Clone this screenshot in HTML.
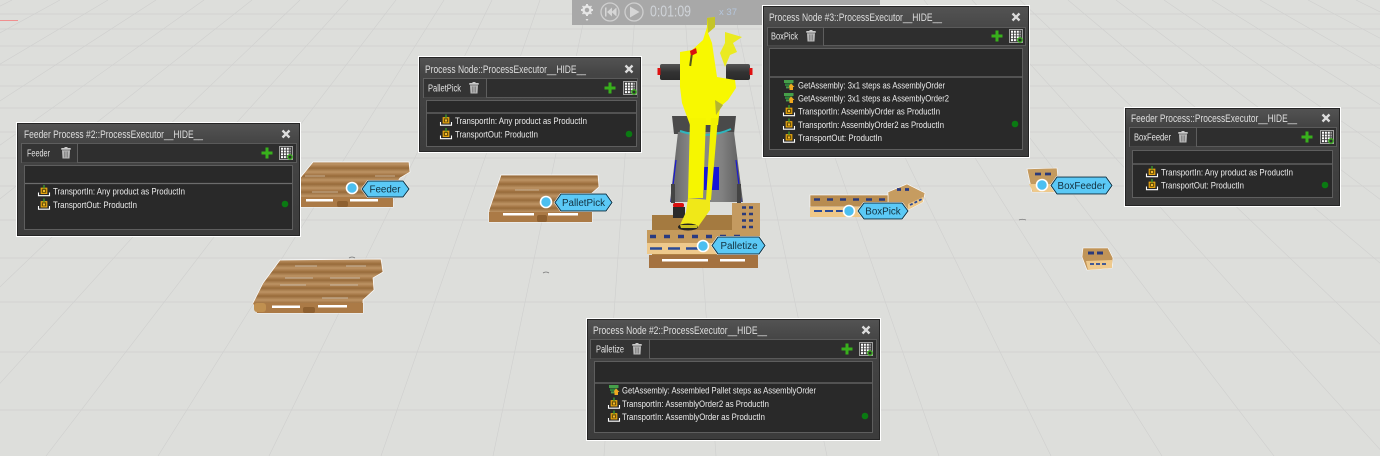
<!DOCTYPE html>
<html>
<head>
<meta charset="utf-8">
<style>
html,body{margin:0;padding:0;width:1380px;height:456px;overflow:hidden;background:#dddedb}
svg{display:block}
text{font-family:"Liberation Sans",sans-serif}
.t{font-size:11px;fill:#dedede}
.r{font-size:9.3px;fill:#ececec}
.l{font-size:9.8px;fill:#e6e6e6}
.h{font-size:9.8px;fill:#12303e;text-anchor:middle}
.o{fill:url(#pg);stroke:#252525;stroke-width:1}
.w{fill:none;stroke:#fff;stroke-width:1}
.s{fill:#2e2e2e;stroke:#5a5a5a;stroke-width:1}
.b{fill:#292929;stroke:#5e5e5e;stroke-width:1}
.e{stroke:#6c6c6c;stroke-width:1.3}
.tb{fill:#343434;stroke:#5e5e5e;stroke-width:1}
.g{stroke:#cfcfce;stroke-width:.6;fill:none}
.hz{stroke:#d3d3d2;stroke-width:1}
.wood{stroke:#fff;stroke-width:.7}
.m{fill:#4cbff0;stroke:#fff;stroke-width:1.6}
.x{fill:#5bc9f6;stroke:#12303e;stroke-width:1}
.xh{fill:none;stroke:#fff;stroke-width:2}
</style>
</head>
<body>
<svg width="1380" height="456" viewBox="0 0 1380 456" xmlns="http://www.w3.org/2000/svg">
<defs>
<linearGradient id="pg" x1="0" y1="0" x2="0" y2="1"><stop offset="0" stop-color="#535353"/><stop offset=".18" stop-color="#444"/><stop offset="1" stop-color="#3c3c3c"/></linearGradient>
<linearGradient id="st1" gradientUnits="userSpaceOnUse" x1="0" y1="0" x2="0" y2="8" spreadMethod="repeat"><stop offset="0" stop-color="#966a3a"/><stop offset=".5" stop-color="#bd9364"/><stop offset="1" stop-color="#9a6c3a"/></linearGradient>
<linearGradient id="gy" x1="0" y1="0" x2="1" y2="0"><stop offset="0" stop-color="#636363"/><stop offset=".3" stop-color="#8a8a8a"/><stop offset=".7" stop-color="#828282"/><stop offset="1" stop-color="#5a5a5a"/></linearGradient>
<linearGradient id="mt" x1="0" y1="0" x2="0" y2="1"><stop offset="0" stop-color="#555"/><stop offset=".5" stop-color="#333"/><stop offset="1" stop-color="#2a2a2a"/></linearGradient>
<g id="tr">
<path d="M-5.500 1.500v3.200h11v-3.200" fill="none" stroke="#fff" stroke-width="1.100"/>
<rect x="-2.800" y="-2.800" width="5.600" height="5.200" fill="#6a5208" stroke="#f0aa10" stroke-width="1.100"/>
<path d="M0 -6v3.500" stroke="#3aa02a" stroke-width="1.300"/>
<rect x="-1" y="-1" width="2" height="2" fill="#f4b830"/>
</g>
<g id="as">
<rect x="-5" y="-5" width="9.500" height="3" fill="#46a04a"/>
<rect x="-4" y="-1.600" width="7.500" height="2.600" fill="#2f7f3a"/>
<rect x="-3" y="1.400" width="4" height="2" fill="#4a9a4a"/>
<path d="M0 1l2-2.500 3.500 3.500h-1.500v3h-3.500v-2.500z" fill="#f0a820"/>
</g>
<g id="tsh">
<path d="M-1.500 -6h3v1h3.200v1.700h-9.400v-1.700h3.200z" fill="#cacaca"/>
<path d="M-4 -2.800h8l-.5 8.300h-7z" fill="#b8b8b8"/>
<path d="M-1.700 -1.500v6M0 -1.500v6M1.700 -1.500v6" stroke="#6a6a6a" stroke-width=".6"/>
</g>
<path id="pl" d="M-5.500 0h11M0 -5.500v11" stroke="#38b01c" stroke-width="3" fill="none"/>
<g id="gd">
<rect x="-6.500" y="-6.500" width="13" height="13" fill="#3a3a3a" stroke="#a0a0a0" stroke-width="1"/>
<path d="M-5 -4.300h9.500M-5 -1.500h9.500M-5 1.300h9.500M-5 4.100h6.500" stroke="#fff" stroke-width="2" stroke-dasharray="2 .9"/>
<circle cx="4" cy="4" r="2.200" fill="#2c2c2c" stroke="#38b01c" stroke-width="1.300"/>
</g>
<path id="cl" d="M-3.500 -3.500l7 7M3.500 -3.500l-7 7" stroke="#dcdcdc" stroke-width="2.300" fill="none"/>
</defs>

<rect width="1380" height="456" fill="#dddedb"/>

<!-- ground grid -->
<g class="hz">
<path d="M0 14H1380M0 29H1380M0 46H1380M0 65H1380M0 86H1380M0 108H1380M0 132H1380M0 158H1380M0 186H1380M0 220H1380M0 258H1380M0 302H1380M0 352H1380M0 410H1380"/>
</g>
<g class="g">
<path d="M12 0L-884 456M60 0L-772 456M108 0L-660 456M156 0L-549 456M204 0L-437 456M252 0L-326 456M300 0L-177 456M348 0L-66 456M396 0L46 456M444 0L158 456M492 0L269 456M540 0L381 456M588 0L493 456M636 0L604 456M684 0L716 456M732 0L827 456M780 0L939 456M828 0L1051 456M876 0L1162 456M924 0L1274 456M972 0L1386 456M1020 0L1497 456M1068 0L1609 456M1116 0L1720 456M1164 0L1832 456M1212 0L1944 456M1260 0L2055 456M1308 0L2167 456M1356 0L2279 456"/>
</g>
<path d="M0 20.500H18" stroke="#f08f8f" stroke-width="1"/>

<!-- tiny ground marks -->
<g fill="none" stroke="#777" stroke-width=".8">
<path d="M349 258q3-2 6 0M543 273q3-2 6 0M1019 220q3-1.500 7 0"/>
</g>

<!-- playback bar -->
<rect x="572" y="0" width="308" height="25" fill="#a8a8a8"/>
<g fill="#e6e6e6">
<circle cx="587" cy="10" r="3.500" fill="none" stroke="#e6e6e6" stroke-width="2.500"/>
<path d="M586 4h2v2h-2zM586 14h2v2h-2zM581 9h2v2h-2zM591 9h2v2h-2zM583 5.500l1.500 1.500-1 1-1.500-1.500zM591 5.500l-1.500 1.500 1 1 1.500-1.500zM583 14.500l1.500-1.500-1-1-1.500 1.500zM591 14.500l-1.500-1.500 1-1 1.500 1.500z"/>
<path d="M585.500 19h3l-1.500 2z"/>
</g>
<g fill="none" stroke="#cfcfcf" stroke-width="1.300">
<circle cx="610" cy="12" r="9"/>
<circle cx="634" cy="12" r="9"/>
</g>
<path d="M605 7.500h1.500v9h-1.500zM612 7.500v9l-5-4.500zM616.500 7.500v9l-5-4.500z" fill="#d6d6d6"/>
<path d="M630 6.500l9.500 5.500-9.500 5.500z" fill="#d6d6d6"/>
<text x="650" y="16.500" font-size="16" fill="#cfd3d8" textLength="41" lengthAdjust="spacingAndGlyphs">0:01:09</text>
<text x="719" y="15" font-size="9.500" fill="#b5c6dc" textLength="18" lengthAdjust="spacing">x 37</text>

<!-- pallet A (Feeder) -->
<g>
<path class="wood" d="M313 162L409 162L410 172L400 178L393 190V207H300V178Z" fill="url(#st1)"/>
<path d="M305 176h20M375 176h20M312 192h26" stroke="#d0c0aa" stroke-width=".8"/>
<rect x="300" y="197" width="93" height="10" fill="#ab7a46"/>
<rect x="337" y="201" width="11" height="6" rx="2" fill="#8e6030"/>
<rect x="306" y="199" width="27" height="2.500" fill="#fff"/>
<rect x="350" y="199" width="28" height="2.500" fill="#fff"/>
</g>
<!-- pallet B -->
<g>
<path class="wood" d="M280 260L381 259L383 272L373 278L374 290L363 300V313H257L253 303L263 283Z" fill="url(#st1)"/>
<path d="M295 266h22M346 266h20M285 278h28M330 278h30M280 285h26M330 285h28M322 298h26" stroke="#d0c8ba" stroke-width=".8"/>
<path d="M253 303H363V313H257Z" fill="#ab7a46"/>
<rect x="254" y="303" width="12" height="9" rx="3" fill="#c09050"/>
<rect x="303" y="307" width="12" height="6" rx="2" fill="#8e6030"/>
<rect x="272" y="305.500" width="28" height="2.500" fill="#fff"/>
<rect x="318" y="305" width="29" height="2.500" fill="#fff"/>
</g>
<!-- pallet C (PalletPick) -->
<g>
<path class="wood" d="M501 175L598 175L599 187L592 193V222H489V210Z" fill="url(#st1)"/>
<path d="M515 190h24M560 196h26" stroke="#d0c0aa" stroke-width=".8"/>
<rect x="489" y="212" width="103" height="10" fill="#ab7a46"/>
<rect x="537" y="215" width="10" height="7" rx="2" fill="#8e6030"/>
<rect x="503" y="213" width="31" height="2.500" fill="#fff"/>
<rect x="548" y="213" width="30" height="2.500" fill="#fff"/>
</g>

<!-- robot -->
<g>
<rect x="660" y="64" width="24" height="16" rx="2" fill="url(#mt)"/>
<rect x="726" y="64" width="24" height="16" rx="2" fill="url(#mt)"/>
<rect x="657.500" y="68" width="3" height="7" fill="#e01010"/>
<rect x="749.500" y="68" width="3" height="7" fill="#e01010"/>
<path d="M672 116H736L734 134H674Z" fill="#4a4a4a"/>
<path d="M678 132H734L743 202H670Z" fill="url(#gy)"/>
<path d="M680 131Q707 140 731 129" stroke="#2fb5bd" stroke-width="2" fill="none"/>
<path d="M676 160L671 202M736 160L741 202" stroke="#1a1ad0" stroke-width="1.200" fill="none"/>
<rect x="671" y="184" width="4" height="19" fill="#444"/>
<rect x="737" y="184" width="4" height="19" fill="#444"/>
<rect x="704" y="167" width="15" height="23" fill="#1616d8"/>
<!-- second upper piece -->
<path d="M725 32L742 37L733 43L737 52L730 55L725 67L720 53L725 43Z" fill="#eaea20"/>
<!-- main upper body -->
<path d="M680 52L692 50L703 40L707 27L707 18L715 17L715 27L708 33L712 43L717 77L735 80L736 88L728 100L720 107L718 125L690 125L682 103L680 87Z" fill="#f8f800"/>
<path d="M707 18L715 17L715 27L708 33Z" fill="#c4c428"/>
<path d="M715 100L723 105L716 115Z" fill="#b5b530"/>
<path d="M690 51L696 48L697 53L691 56Z" fill="#d81010"/>
<rect x="690" y="55" width="2" height="11" fill="#55551a" transform="rotate(8 691 60)"/>
<!-- arm links -->
<path d="M690 118H706L703 198H688Z" fill="#f6f600"/>
<path d="M711 118H718L711 200H706Z" fill="#f2f200"/>
</g>

<!-- palletize stack -->
<g>
<path d="M652 215H758V255H652Z" fill="#b08244"/>
<path d="M652 215H732V230H652Z" fill="#a47a40"/>
<rect x="732" y="203" width="28" height="30" fill="#c49a60"/>
<path d="M742 207.500h11M742 214h11M742 220.500h11M742 227h11" stroke="#2a3a7a" stroke-width="2.500" stroke-dasharray="4 3"/>
<rect x="647" y="230" width="113" height="13" fill="#c59a5c"/>
<path d="M650 236.500H745" stroke="#2a3a80" stroke-width="3.500" stroke-dasharray="6 8"/>
<rect x="647" y="243" width="113" height="11" fill="#eec98c"/>
<path d="M650 248.500H700" stroke="#2a4a96" stroke-width="2.500" stroke-dasharray="12 6"/>
<path d="M649 255H758V268H649Z" fill="#a47240"/>
<rect x="662" y="259" width="46" height="2.500" fill="#fff"/>
<rect x="720" y="259" width="25" height="2.500" fill="#fff"/>
<rect x="673" y="203" width="11" height="4.500" rx="2" fill="#d81010"/>
<rect x="673" y="207" width="12" height="11" fill="#2a2a2a"/>
<path d="M688 198L710 200V210L698 227L680 225L686 212Z" fill="#f0e818"/>
<ellipse cx="688" cy="227" rx="10" ry="3.500" fill="#222"/>
<path d="M680 225H698L697 228H681Z" fill="#c8c020"/>
</g>

<!-- boxes -->
<g>
<path d="M888 192L907 184L925 193L923 202L908 210L888 204Z" fill="#c69c60" stroke="#fff" stroke-width=".6"/>
<path d="M897 189.500h12" stroke="#2a3a80" stroke-width="2.800" stroke-dasharray="4 4"/>
<path d="M908 204L923 197L923 202L908 210Z" fill="#eec98c"/>
<path d="M910 205L922 199" stroke="#2a4a96" stroke-width="1.800" stroke-dasharray="3 2"/>
<rect x="810" y="195" width="78" height="12" fill="#b88c50" stroke="#fff" stroke-width=".6"/>
<path d="M814 199.500H886" stroke="#2a3a7a" stroke-width="2.600" stroke-dasharray="6 7"/>
<rect x="810" y="207" width="78" height="10" fill="#efc888"/>
<path d="M814 211H846" stroke="#2a4a96" stroke-width="2" stroke-dasharray="8 3"/>
<path d="M1027 169L1057 168L1059 192L1032 192Z" fill="#c49a5e" stroke="#fff" stroke-width=".6"/>
<path d="M1035 174h20" stroke="#2a3a7a" stroke-width="2.800" stroke-dasharray="6 4"/>
<path d="M1029 184L1033 192H1058V184Z" fill="#eec98c"/>
<path d="M1083 248L1108 248L1113 258L1112 268L1087 270L1082 257Z" fill="#c09458" stroke="#fff" stroke-width=".6"/>
<path d="M1088 253h18" stroke="#2a3a7a" stroke-width="3" stroke-dasharray="6 3"/>
<path d="M1086 261L1112 260V268L1088 270Z" fill="#eec98c"/>
<path d="M1090 264h18" stroke="#2a4a96" stroke-width="1.800" stroke-dasharray="4 2"/>
</g>

<!-- markers and tags -->
<g>
<path class="xh" d="M362 189L368 181H403L409 189L403 197H368Z"/>
<path class="x" d="M362 189L368 181H403L409 189L403 197H368Z"/>
<text class="h" x="385" y="192.500">Feeder</text>
<circle class="m" cx="352" cy="188" r="5.500"/>

<path class="xh" d="M555 202.500L561 194H606L612 202.500L606 211H561Z"/>
<path class="x" d="M555 202.500L561 194H606L612 202.500L606 211H561Z"/>
<text class="h" x="583.500" y="206">PalletPick</text>
<circle class="m" cx="546" cy="202" r="5.500"/>

<path class="xh" d="M712 245.500L718 237H759L765 245.500L759 254H718Z"/>
<path class="x" d="M712 245.500L718 237H759L765 245.500L759 254H718Z"/>
<text class="h" x="739" y="249">Palletize</text>
<circle class="m" cx="703" cy="246" r="5.500"/>

<path class="xh" d="M858 211L864 203H902L908 211L902 219H864Z"/>
<path class="x" d="M858 211L864 203H902L908 211L902 219H864Z"/>
<text class="h" x="883" y="214.500">BoxPick</text>
<circle class="m" cx="849" cy="211" r="5.500"/>

<path class="xh" d="M1051 185.500L1057 177H1106L1112 185.500L1106 194H1057Z"/>
<path class="x" d="M1051 185.500L1057 177H1106L1112 185.500L1106 194H1057Z"/>
<text class="h" x="1081.500" y="189">BoxFeeder</text>
<circle class="m" cx="1042" cy="185" r="5.500"/>
</g>

<!-- Feeder panel -->
<g>
<rect class="w" x="16.500" y="122.500" width="284" height="114"/>
<rect class="o" x="17.500" y="123.500" width="282" height="112"/>
<text class="t" x="24" y="138" textLength="179" lengthAdjust="spacingAndGlyphs">Feeder Process #2::ProcessExecutor__HIDE__</text>
<use href="#cl" x="286" y="134"/>
<rect class="s" x="21.500" y="143.500" width="275" height="19"/>
<path class="tb" d="M21.500 162.500V143.500H77.500V162.500"/>
<text class="l" x="27" y="156.500" textLength="23" lengthAdjust="spacingAndGlyphs">Feeder</text>
<use href="#tsh" x="66" y="153"/>
<use href="#pl" x="267" y="153"/>
<use href="#gd" x="286" y="153"/>
<rect class="b" x="24.500" y="165.500" width="268" height="64"/>
<path class="e" d="M25 183.500H292"/>
<use href="#tr" x="44" y="191"/>
<text class="r" x="53" y="194.500" textLength="132" lengthAdjust="spacingAndGlyphs">TransportIn: Any product as ProductIn</text>
<use href="#tr" x="44" y="204.500"/>
<text class="r" x="53" y="208" textLength="84" lengthAdjust="spacingAndGlyphs">TransportOut: ProductIn</text>
<circle cx="285" cy="204" r="3.300" fill="#0a7a12"/>
</g>

<!-- PalletPick panel -->
<g>
<rect class="w" x="418.500" y="56.500" width="223" height="96"/>
<rect class="o" x="419.500" y="57.500" width="221" height="94"/>
<text class="t" x="425" y="73" textLength="161" lengthAdjust="spacingAndGlyphs">Process Node::ProcessExecutor__HIDE__</text>
<use href="#cl" x="629" y="69"/>
<rect class="s" x="423.500" y="78.500" width="214" height="19"/>
<path class="tb" d="M423.500 97.500V78.500H486.500V97.500"/>
<text class="l" x="428" y="91.500" textLength="33" lengthAdjust="spacingAndGlyphs">PalletPick</text>
<use href="#tsh" x="474" y="88"/>
<use href="#pl" x="610" y="88"/>
<use href="#gd" x="630" y="88"/>
<rect class="b" x="426.500" y="100.500" width="210" height="46"/>
<path class="e" d="M427 113H636"/>
<use href="#tr" x="446" y="120.500"/>
<text class="r" x="455" y="124" textLength="132" lengthAdjust="spacingAndGlyphs">TransportIn: Any product as ProductIn</text>
<use href="#tr" x="446" y="134"/>
<text class="r" x="455" y="137.500" textLength="83" lengthAdjust="spacingAndGlyphs">TransportOut: ProductIn</text>
<circle cx="629" cy="134" r="3.300" fill="#0a7a12"/>
</g>

<!-- BoxPick panel -->
<g>
<rect class="w" x="762.500" y="5.500" width="267" height="152"/>
<rect class="o" x="763.500" y="6.500" width="265" height="150"/>
<text class="t" x="769" y="21" textLength="173" lengthAdjust="spacingAndGlyphs">Process Node #3::ProcessExecutor__HIDE__</text>
<use href="#cl" x="1016" y="17"/>
<rect class="s" x="767.500" y="27.500" width="258" height="18"/>
<path class="tb" d="M767.500 45.500V27.500H823.500V45.500"/>
<text class="l" x="771" y="39.500" textLength="27" lengthAdjust="spacingAndGlyphs">BoxPick</text>
<use href="#tsh" x="811" y="36"/>
<use href="#pl" x="997" y="36"/>
<use href="#gd" x="1016" y="36"/>
<rect class="b" x="769.500" y="48.500" width="253" height="101"/>
<path class="e" d="M770 77H1022"/>
<use href="#as" x="789" y="85"/>
<text class="r" x="798" y="88.500" textLength="147" lengthAdjust="spacingAndGlyphs">GetAssembly: 3x1 steps as AssemblyOrder</text>
<use href="#as" x="789" y="98"/>
<text class="r" x="798" y="101.500" textLength="151" lengthAdjust="spacingAndGlyphs">GetAssembly: 3x1 steps as AssemblyOrder2</text>
<use href="#tr" x="789" y="111"/>
<text class="r" x="798" y="114.500" textLength="142" lengthAdjust="spacingAndGlyphs">TransportIn: AssemblyOrder as ProductIn</text>
<use href="#tr" x="789" y="124.500"/>
<text class="r" x="798" y="128" textLength="146" lengthAdjust="spacingAndGlyphs">TransportIn: AssemblyOrder2 as ProductIn</text>
<use href="#tr" x="789" y="137.500"/>
<text class="r" x="798" y="141" textLength="84" lengthAdjust="spacingAndGlyphs">TransportOut: ProductIn</text>
<circle cx="1015" cy="124" r="3.300" fill="#0a7a12"/>
</g>

<!-- BoxFeeder panel -->
<g>
<rect class="w" x="1124.500" y="107.500" width="216" height="99"/>
<rect class="o" x="1125.500" y="108.500" width="214" height="97"/>
<text class="t" x="1131" y="122" textLength="166" lengthAdjust="spacingAndGlyphs">Feeder Process::ProcessExecutor__HIDE__</text>
<use href="#cl" x="1326" y="118"/>
<rect class="s" x="1129.500" y="127.500" width="207" height="19"/>
<path class="tb" d="M1129.500 146.500V127.500H1196.500V146.500"/>
<text class="l" x="1134" y="140.500" textLength="37" lengthAdjust="spacingAndGlyphs">BoxFeeder</text>
<use href="#tsh" x="1183" y="137"/>
<use href="#pl" x="1307" y="137"/>
<use href="#gd" x="1327" y="137"/>
<rect class="b" x="1132.500" y="150.500" width="200" height="47"/>
<path class="e" d="M1133 164H1332"/>
<use href="#tr" x="1152" y="172"/>
<text class="r" x="1161" y="175.500" textLength="132" lengthAdjust="spacingAndGlyphs">TransportIn: Any product as ProductIn</text>
<use href="#tr" x="1152" y="185"/>
<text class="r" x="1161" y="188.500" textLength="83" lengthAdjust="spacingAndGlyphs">TransportOut: ProductIn</text>
<circle cx="1325" cy="185" r="3.300" fill="#0a7a12"/>
</g>

<!-- Palletize panel -->
<g>
<rect class="w" x="586.500" y="318.500" width="294" height="122"/>
<rect class="o" x="587.500" y="319.500" width="292" height="120"/>
<text class="t" x="593" y="334" textLength="174" lengthAdjust="spacingAndGlyphs">Process Node #2::ProcessExecutor__HIDE__</text>
<use href="#cl" x="866" y="330"/>
<rect class="s" x="590.500" y="339.500" width="286" height="19"/>
<path class="tb" d="M590.500 358.500V339.500H649.500V358.500"/>
<text class="l" x="596" y="352.500" textLength="28" lengthAdjust="spacingAndGlyphs">Palletize</text>
<use href="#tsh" x="637" y="349"/>
<use href="#pl" x="847" y="349"/>
<use href="#gd" x="866" y="349"/>
<rect class="b" x="594.500" y="361.500" width="278" height="71"/>
<path class="e" d="M595 383H872"/>
<use href="#as" x="614" y="390"/>
<text class="r" x="622" y="393.500" textLength="194" lengthAdjust="spacingAndGlyphs">GetAssembly: Assembled Pallet steps as AssemblyOrder</text>
<use href="#tr" x="614" y="403.500"/>
<text class="r" x="622" y="407" textLength="147" lengthAdjust="spacingAndGlyphs">TransportIn: AssemblyOrder2 as ProductIn</text>
<use href="#tr" x="614" y="416.500"/>
<text class="r" x="622" y="420" textLength="143" lengthAdjust="spacingAndGlyphs">TransportIn: AssemblyOrder as ProductIn</text>
<circle cx="865" cy="416" r="3.300" fill="#0a7a12"/>
</g>
</svg>
</body>
</html>
